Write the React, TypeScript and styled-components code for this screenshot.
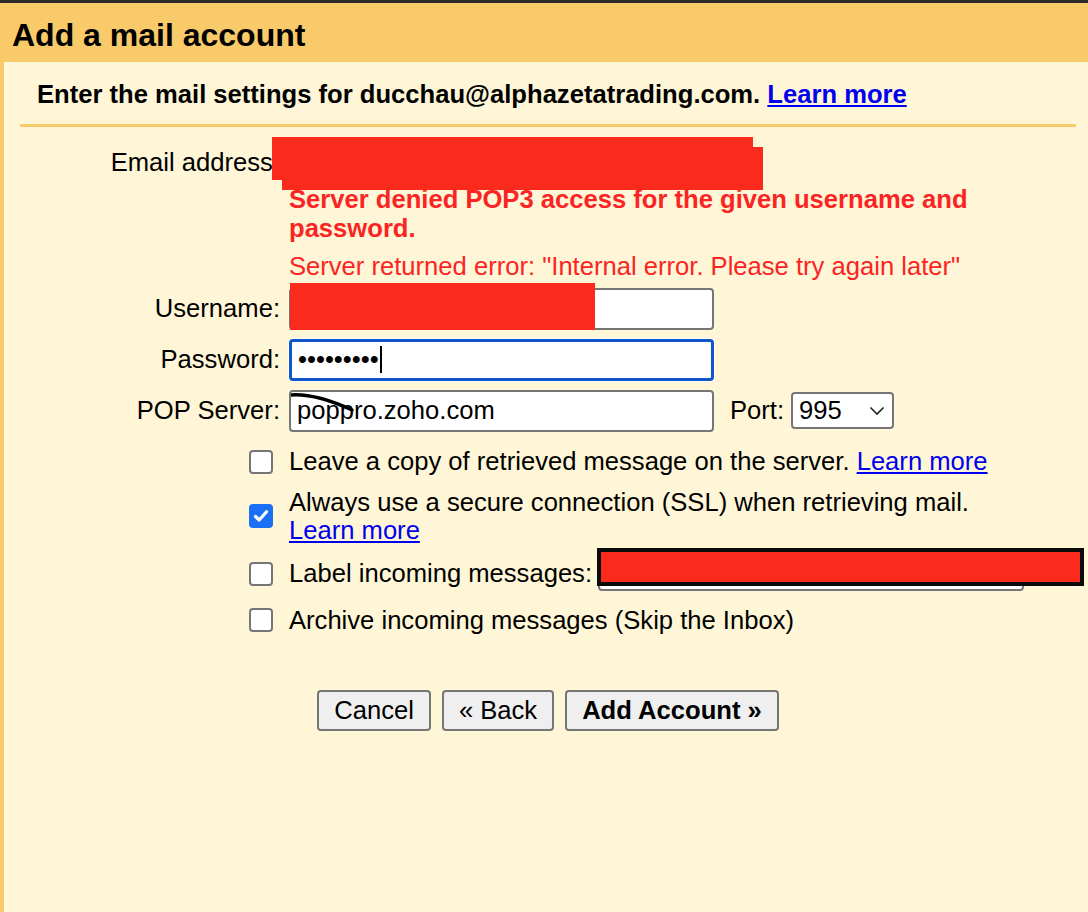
import React from 'react';
import styled, { createGlobalStyle } from 'styled-components';

const GlobalStyle = createGlobalStyle`
  html, body {
    margin: 0;
    padding: 0;
  }
  body {
    background: #fef6d6;
    font-family: 'Liberation Sans', Arial, Helvetica, sans-serif;
    color: #000;
  }
`;

const Window = styled.div`
  min-height: 912px;
  box-sizing: border-box;
  border-top: 3px solid #2b2b2b;
  display: flex;
  flex-direction: column;
`;

const TitleBar = styled.header`
  height: 59px;
  flex: none;
  background: #f9ca69;
  display: flex;
  align-items: center;
  padding: 5px 0 0 12px;
  box-sizing: border-box;
`;

const Title = styled.h1`
  margin: 0;
  font-size: 32px;
  font-weight: 700;
  line-height: 1;
`;

const Content = styled.main`
  flex: 1;
  border-left: 4px solid #f9ca69;
  background: #fef6d6;
  font-size: 25.6px;
  line-height: 29px;
`;

const Intro = styled.p`
  margin: 0;
  padding: 17.5px 0 0 33px;
  font-weight: 700;
`;

const Link = styled.a<{ $bold?: boolean }>`
  color: #0000ee;
  text-decoration: underline;
  font-weight: ${({ $bold }) => ($bold ? 700 : 400)};
  cursor: pointer;
`;

const Divider = styled.div`
  height: 3px;
  margin: 15px 12px 0 16px;
  background: #f9ca69;
`;

const Row = styled.div<{ $top: number }>`
  display: flex;
  align-items: center;
  margin-top: ${({ $top }) => $top}px;
`;

const Label = styled.div`
  width: 276px;
  flex: none;
  margin-right: 9px;
  text-align: right;
  white-space: nowrap;
`;

const Cell = styled.div`
  position: relative;
  display: flex;
  align-items: center;
`;

const Redaction = styled.div<{ $outlined?: boolean }>`
  position: absolute;
  background: #fa2b1d;
  box-sizing: border-box;
  border: ${({ $outlined }) => ($outlined ? '4px solid #0a0a0a' : 'none')};
`;

const ErrorBlock = styled.div`
  color: #fb2424;
  width: 700px;
`;

const ErrorTitle = styled.div`
  font-weight: 700;
`;

const ErrorDetail = styled.div`
  margin-top: 9px;
`;

const Field = styled.div<{ $focused?: boolean }>`
  position: relative;
  width: 425px;
  height: 42px;
  box-sizing: border-box;
  display: flex;
  align-items: center;
  padding: 0 6px;
  background: #fff;
  border: ${({ $focused }) => ($focused ? '3px solid #0f56c9' : '2px solid #767676')};
  border-radius: 4px;
  box-shadow: ${({ $focused }) => ($focused ? '0 0 0 1px #ffffff' : 'none')};
  white-space: nowrap;
  overflow: hidden;
`;

const Caret = styled.span`
  display: inline-block;
  width: 2px;
  height: 27px;
  background: #000;
  margin-left: 1px;
`;

const Scribble = styled.svg`
  position: absolute;
  left: -2px;
  top: 0;
`;

const PortLabel = styled.span`
  margin: 0 7px 0 16px;
`;

const Select = styled.div<{ $width: number; $height: number }>`
  position: relative;
  width: ${({ $width }) => $width}px;
  height: ${({ $height }) => $height}px;
  box-sizing: border-box;
  display: flex;
  align-items: center;
  justify-content: space-between;
  padding: 0 7px 0 6px;
  background: #fff;
  border: 2px solid #767676;
  border-radius: 4px;
`;

const LabelSelectWrap = styled.div`
  position: relative;
  margin: -8px 0 0 6px;
`;

const Checks = styled.div``;

const CheckCell = styled.div`
  width: 276px;
  flex: none;
  display: flex;
  justify-content: flex-end;
  padding-right: 7px;
  box-sizing: border-box;
  margin-right: 9px;
`;

const Box = styled.span<{ $checked?: boolean }>`
  width: 24px;
  height: 24px;
  box-sizing: border-box;
  border-radius: 4px;
  display: flex;
  align-items: center;
  justify-content: center;
  background: ${({ $checked }) => ($checked ? '#1a6ff4' : '#fff')};
  border: ${({ $checked }) => ($checked ? 'none' : '2px solid #767676')};
`;

const CheckText = styled.div<{ $tight?: boolean }>`
  line-height: ${({ $tight }) => ($tight ? 28 : 29)}px;
  white-space: nowrap;
`;

const Buttons = styled.div`
  display: flex;
  justify-content: center;
  gap: 11px;
  margin-top: 55.5px;
  padding-left: 4px;
`;

const Button = styled.button<{ $primary?: boolean }>`
  height: 41px;
  box-sizing: border-box;
  padding: 0 15px;
  background: #efefef;
  border: 2px solid #767676;
  border-radius: 4px;
  font-family: inherit;
  font-size: 25.6px;
  font-weight: ${({ $primary }) => ($primary ? 700 : 400)};
  color: #000;
  cursor: pointer;
`;

const Checkbox: React.FC<{ checked?: boolean }> = ({ checked }) => (
  <CheckCell>
    <Box $checked={checked}>
      {checked && (
        <svg width="16" height="16" viewBox="0 0 16 16">
          <path d="M2.5 8.5 L6.2 12 L13.5 3.8" fill="none" stroke="#fff" strokeWidth="3.2" strokeLinecap="round" strokeLinejoin="round" />
        </svg>
      )}
    </Box>
  </CheckCell>
);

const Chevron = () => (
  <svg width="16" height="10" viewBox="0 0 16 10">
    <path d="M1.5 1.5 L8 8 L14.5 1.5" fill="none" stroke="#222" strokeWidth="1.6" />
  </svg>
);

export default function App() {
  return (
    <>
      <GlobalStyle />
      <Window>
        <TitleBar>
          <Title>Add a mail account</Title>
        </TitleBar>
        <Content>
          <Intro>
            Enter the mail settings for ducchau@alphazetatrading.com. <Link $bold>Learn more</Link>
          </Intro>
          <Divider />

          <Row $top={21.5}>
            <Label>Email address:</Label>
            <Cell>
              <span>ducchau@alphazetatrading.com</span>
              <Redaction style={{ left: -17, top: -11.5, width: 481, height: 43 }} />
              <Redaction style={{ left: -7, top: -1.5, width: 481, height: 43 }} />
            </Cell>
          </Row>

          <Row $top={8}>
            <Label />
            <ErrorBlock>
              <ErrorTitle>Server denied POP3 access for the given username and password.</ErrorTitle>
              <ErrorDetail>Server returned error: "Internal error. Please try again later"</ErrorDetail>
            </ErrorBlock>
          </Row>

          <Row $top={6.5}>
            <Label>Username:</Label>
            <Cell>
              <Field>ducchau</Field>
              <Redaction style={{ left: 1, top: -5, width: 305, height: 47 }} />
            </Cell>
          </Row>

          <Row $top={9}>
            <Label>Password:</Label>
            <Field $focused>
              •••••••••<Caret />
            </Field>
          </Row>

          <Row $top={9}>
            <Label>POP Server:</Label>
            <Field>
              poppro.zoho.com
              <Scribble width="70" height="24" viewBox="0 0 70 24">
                <path d="M1 3 Q 26 1 63 18" fill="none" stroke="#000" strokeWidth="3.4" strokeLinecap="round" />
              </Scribble>
            </Field>
            <PortLabel>Port:</PortLabel>
            <Select $width={103} $height={37}>
              <span>995</span>
              <Chevron />
            </Select>
          </Row>

          <Checks>
            <Row $top={15.5}>
              <Checkbox />
              <CheckText>
                Leave a copy of retrieved message on the server. <Link>Learn more</Link>
              </CheckText>
            </Row>
            <Row $top={12}>
              <Checkbox checked />
              <CheckText $tight>
                Always use a secure connection (SSL) when retrieving mail.
                <br />
                <Link>Learn more</Link>
              </CheckText>
            </Row>
            <Row $top={12.5}>
              <Checkbox />
              <CheckText>Label incoming messages:</CheckText>
              <LabelSelectWrap>
                <Select $width={426} $height={42}>
                  <span>ducchau</span>
                  <Chevron />
                </Select>
                <Redaction $outlined style={{ left: -1, top: -1, width: 487, height: 38 }} />
              </LabelSelectWrap>
            </Row>
            <Row $top={15}>
              <Checkbox />
              <CheckText>Archive incoming messages (Skip the Inbox)</CheckText>
            </Row>
          </Checks>

          <Buttons>
            <Button>Cancel</Button>
            <Button>« Back</Button>
            <Button $primary>Add Account »</Button>
          </Buttons>
        </Content>
      </Window>
    </>
  );
}
